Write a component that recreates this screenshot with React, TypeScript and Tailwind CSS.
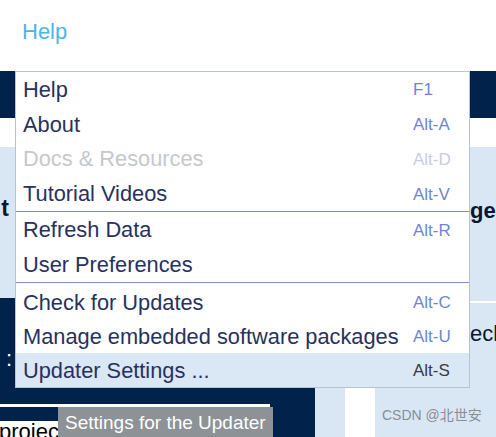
const groups = [
  [
    { label: 'Help', key: 'F1' },
    { label: 'About', key: 'Alt-A' },
    { label: 'Docs & Resources', key: 'Alt-D', disabled: true },
    { label: 'Tutorial Videos', key: 'Alt-V' },
  ],
  [
    { label: 'Refresh Data', key: 'Alt-R' },
    { label: 'User Preferences', key: '' },
  ],
  [
    { label: 'Check for Updates', key: 'Alt-C' },
    { label: 'Manage embedded software packages', key: 'Alt-U' },
    { label: 'Updater Settings ...', key: 'Alt-S', active: true },
  ],
]

const groupStyles = ['h-[139px]', 'h-[71px]', 'h-[105px] pt-[2px]']

type Item = { label: string; key: string; disabled?: boolean; active?: boolean }

function MenuRow({ item }: { item: Item }) {
  const labelColor = item.disabled ? 'text-[#c6c8cc]' : 'text-[#28315e]'
  const keyColor = item.disabled
    ? 'text-[#c9cde0]'
    : item.active
      ? 'text-[#3a3a40]'
      : 'text-[#7085d2]'
  return (
    <div
      className={`flex flex-1 items-center pl-[7px] pt-px ${item.active ? 'bg-[#dae7f4]' : ''}`}
    >
      <span className={`flex-1 text-[21.8px] leading-none ${labelColor}`}>{item.label}</span>
      <span className={`w-[56px] text-[17px] leading-none ${keyColor}`}>{item.key}</span>
    </div>
  )
}

export default function App() {
  return (
    <div
      className="relative h-[437px] w-[496px] overflow-hidden bg-white"
      style={{ fontFamily: '"Liberation Sans", Arial, sans-serif' }}
    >
      {/* page behind the menu */}
      <div className="flex h-[71px] items-center pb-[8px] pl-[22px]">
        <span className="text-[22px] leading-none text-[#4cb5e8]">Help</span>
      </div>
      <div className="h-[47px] bg-[#01224a]" />
      <div className="h-[29px] bg-white" />

      <div className="flex h-[151px] bg-[#d9e7f4]">
        <div className="flex w-[9px] justify-end overflow-hidden pt-[50px]">
          <span className="text-[23px] font-bold leading-none text-[#0c1630]">t</span>
        </div>
        <div className="flex-1" />
        <div className="w-[27px] overflow-hidden pt-[53px] pl-px">
          <span className="text-[22px] font-bold leading-none text-[#0c1630]">ge</span>
        </div>
      </div>

      <div className="flex h-[139px]">
        <div className="flex w-[315px] flex-col bg-[#01224a]">
          <div className="h-[50px]" />
          <span className="pl-[6px] text-[22px] leading-none text-white">:</span>
          <div className="h-[34px]" />
          <div className="h-[3px] w-[270px] bg-white" />
          <div className="h-[14px]" />
          <div className="flex w-[58px] flex-1 items-end overflow-hidden bg-white">
            <span className="-mb-[6px] -ml-px text-[22px] leading-none text-black">projec</span>
          </div>
        </div>
        <div className="w-[30px] bg-[#d9e7f4]" />
        <div className="w-[30px] bg-white" />
        <div className="flex flex-1 flex-col bg-[#d9e7f4]">
          <div className="mt-[3px] h-[2px] bg-white" />
          <div className="flex justify-end pt-[20px]">
            <span className="w-[26px] overflow-hidden text-[22px] leading-none text-[#0c1630]">ecl</span>
          </div>
          <div className="flex-1" />
          <div className="pb-[10px] pl-[7px]">
            <span
              className="text-[14px] leading-none text-[#8a8d92]"
              style={{ fontFamily: '"Liberation Sans", "Noto Sans CJK SC", sans-serif' }}
            >
              CSDN @北世安
            </span>
          </div>
        </div>
      </div>

      {/* dropdown menu */}
      <div className="absolute left-[15px] top-[71px] flex w-[455px] flex-col border border-[#b9c3cb] bg-white">
        {groups.map((group, gi) => (
          <div
            key={gi}
            className={`flex flex-col ${groupStyles[gi]} ${gi > 0 ? 'border-t border-[#7d92c4]' : ''}`}
          >
            {group.map((item) => (
              <MenuRow key={item.label} item={item} />
            ))}
          </div>
        ))}
      </div>

      {/* tooltip */}
      <div className="absolute left-[58px] top-[407px] h-[34px] bg-[#8d9297] px-[7px] pt-[5px]">
        <span className="text-[19px] leading-none text-white">Settings for the Updater</span>
      </div>
    </div>
  )
}
